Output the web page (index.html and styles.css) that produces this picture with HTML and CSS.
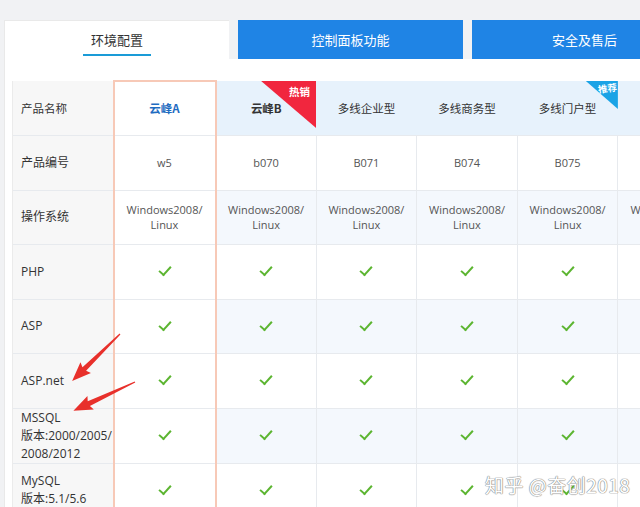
FILE: index.html
```html
<!DOCTYPE html>
<html>
<head>
    <meta charset="utf-8">
    <title>云峰主机 产品对比</title>
    <link rel="stylesheet" href="styles.css">
</head>
<body>
    <div class="page">
        <div class="tabs">
            <div class="tab active"><span>环境配置</span></div>
            <div class="tab">控制面板功能</div>
            <div class="tab">安全及售后</div>
        </div>
        <div class="panel">
            <table class="compare">
                <colgroup>
                    <col class="c-label">
                    <col class="c-hl">
                    <col class="c-std">
                    <col class="c-std">
                    <col class="c-std">
                    <col class="c-std">
                    <col class="c-std">
                </colgroup>
                <tr class="head">
                    <td class="label">产品名称</td>
                    <td class="hl name-a">云峰A</td>
                    <td class="tagged">云峰B<span class="ribbon hot"><em>热销</em></span></td>
                    <td>多线企业型</td>
                    <td>多线商务型</td>
                    <td class="tagged">多线门户型<span class="ribbon rec"><em>推荐</em></span></td>
                    <td></td>
                </tr>
                <tr>
                    <td class="label">产品编号</td>
                    <td class="hl">w5</td>
                    <td>b070</td>
                    <td>B071</td>
                    <td>B074</td>
                    <td>B075</td>
                    <td></td>
                </tr>
                <tr class="alt">
                    <td class="label">操作系统</td>
                    <td class="hl">Windows2008/<br>Linux</td>
                    <td>Windows2008/<br>Linux</td>
                    <td>Windows2008/<br>Linux</td>
                    <td>Windows2008/<br>Linux</td>
                    <td>Windows2008/<br>Linux</td>
                    <td>Windows2008/<br>Linux</td>
                </tr>
                <tr>
                    <td class="label">PHP</td>
                    <td class="hl"><i class="ok"></i></td>
                    <td><i class="ok"></i></td>
                    <td><i class="ok"></i></td>
                    <td><i class="ok"></i></td>
                    <td><i class="ok"></i></td>
                    <td></td>
                </tr>
                <tr class="alt">
                    <td class="label">ASP</td>
                    <td class="hl"><i class="ok"></i></td>
                    <td><i class="ok"></i></td>
                    <td><i class="ok"></i></td>
                    <td><i class="ok"></i></td>
                    <td><i class="ok"></i></td>
                    <td></td>
                </tr>
                <tr>
                    <td class="label">ASP.net</td>
                    <td class="hl"><i class="ok"></i></td>
                    <td><i class="ok"></i></td>
                    <td><i class="ok"></i></td>
                    <td><i class="ok"></i></td>
                    <td><i class="ok"></i></td>
                    <td></td>
                </tr>
                <tr class="alt">
                    <td class="label">MSSQL<br>版本:2000/2005/<br>2008/2012</td>
                    <td class="hl"><i class="ok"></i></td>
                    <td><i class="ok"></i></td>
                    <td><i class="ok"></i></td>
                    <td><i class="ok"></i></td>
                    <td><i class="ok"></i></td>
                    <td></td>
                </tr>
                <tr>
                    <td class="label">MySQL<br>版本:5.1/5.6</td>
                    <td class="hl"><i class="ok"></i></td>
                    <td><i class="ok"></i></td>
                    <td><i class="ok"></i></td>
                    <td><i class="ok"></i></td>
                    <td><i class="ok"></i></td>
                    <td></td>
                </tr>
            </table>
        </div>
    </div>

    <!-- annotation arrows drawn over the screenshot -->
    <svg class="arrows" width="640" height="507" viewBox="0 0 640 507">
        <polygon transform="translate(120 334) rotate(135.6)" points="0,-0.6 50,-2.6 48,-7.5 67,0 48,7.5 50,2.6 0,0.6"/>
        <polygon transform="translate(135 382) rotate(154.9)" points="0,-0.6 51,-2.6 49,-7.5 68,0 49,7.5 51,2.6 0,0.6"/>
    </svg>

    <div class="watermark">知乎 @奋创2018</div>
</body>
</html>
```

FILE: styles.css
```css
html, body {
    margin: 0;
    padding: 0;
}

body {
    width: 640px;
    height: 507px;
    overflow: hidden;
    position: relative;
    background-color: #f1f2f4;
    font-family: "Open Sans", "Noto Sans CJK SC", sans-serif;
    color: #333;
}

.page {
    padding: 20px 0 0 4px;
    width: 900px;
}

.tabs {
    display: flex;
    gap: 9px;
}

.tab {
    width: 225px;
    height: 39px;
    box-sizing: border-box;
    background-color: #1f84e5;
    color: #fff;
    font-family: "Noto Sans CJK SC", sans-serif;
    font-size: 13px;
    display: flex;
    align-items: center;
    justify-content: center;
}

.tab.active {
    background-color: #fff;
    color: #333;
    border-top: 1px solid #e9e9e9;
    border-left: 1px solid #e9e9e9;
}

.tab.active span {
    padding: 0 8px 5px;
    margin-top: 6px;
    border-bottom: 2px solid #1a9bd7;
}

.panel {
    background-color: #fff;
    border-left: 1px solid #e9e9e9;
    padding: 21px 0 0 7px;
    height: 500px;
}

.compare {
    table-layout: fixed;
    border-collapse: collapse;
    width: 706px;
}

.c-label { width: 101px; }
.c-hl { width: 102px; }
.c-std { width: 100.6px; }

.compare td {
    height: 53.5px;
    padding: 0;
    text-align: center;
    vertical-align: middle;
    font-size: 11px;
    line-height: 15px;
    color: #555;
    background-color: #fff;
    border-top: 1px solid #e7eaee;
    border-left: 1px solid #e7eaee;
}

.compare tr.alt td {
    background-color: #f4f8fd;
}

.compare tr.head td {
    height: 53px;
    background-color: #e7f2fc;
    border-top: none;
    border-left: none;
    font-family: "Noto Sans CJK SC", sans-serif;
    font-size: 11.5px;
    color: #333;
}

.compare td.label,
.compare tr.alt td.label,
.compare tr.head td.label {
    background-color: #f7f7f7;
    text-align: left;
    padding-left: 8px;
    font-size: 12px;
    line-height: 18px;
    color: #333;
    border-left: 1px solid #ebebeb;
}

.compare tr.head td.label {
    font-family: "Noto Sans CJK SC", sans-serif;
    font-size: 11.5px;
}

.compare td.hl,
.compare tr.alt td.hl,
.compare tr.head td.hl {
    background-color: #fff;
    border-left: 2px solid #f7c9b7;
    border-right: 2px solid #f7c9b7;
}

.compare tr.head td.hl {
    border-top: 2px solid #f7c9b7;
}

.name-a {
    font-weight: bold;
}

.compare tr.head td.name-a {
    color: #1f6cc1;
}

.compare td.tagged {
    position: relative;
    font-weight: bold;
}

.compare td:nth-child(4),
.compare td:nth-child(5),
.compare td:nth-child(6) {
    font-weight: normal;
}

.ribbon {
    position: absolute;
    top: 0;
    right: 0;
    clip-path: polygon(0 0, 100% 0, 100% 100%);
}

.ribbon em {
    position: absolute;
    top: 4px;
    right: 6px;
    font-style: normal;
    font-weight: bold;
    font-size: 10.5px;
    line-height: 13px;
    color: #fff;
}

.ribbon.hot {
    width: 55px;
    height: 47px;
    background-color: #f1263e;
}

.ribbon.rec {
    width: 32px;
    height: 28px;
    background-color: #1aa3e6;
}

.ribbon.rec em {
    top: 1px;
    right: 1px;
    font-size: 9.5px;
    transform: rotate(-8deg);
}

.ok {
    display: inline-block;
    width: 10px;
    height: 5px;
    border-left: 2px solid #5cb531;
    border-bottom: 2px solid #5cb531;
    transform: rotate(-48deg);
    margin-top: -7px;
    vertical-align: middle;
}

.arrows {
    position: absolute;
    left: 0;
    top: 0;
}

.arrows polygon {
    fill: #e8302b;
}

.watermark {
    position: absolute;
    left: 485px;
    top: 472px;
    font-family: "Noto Sans CJK SC", sans-serif;
    font-size: 19px;
    line-height: 26px;
    color: #fff;
    text-shadow: 0 0 1px #888, 0 0 1px #888, 0 0 1px #888;
    letter-spacing: 0.5px;
}
```
